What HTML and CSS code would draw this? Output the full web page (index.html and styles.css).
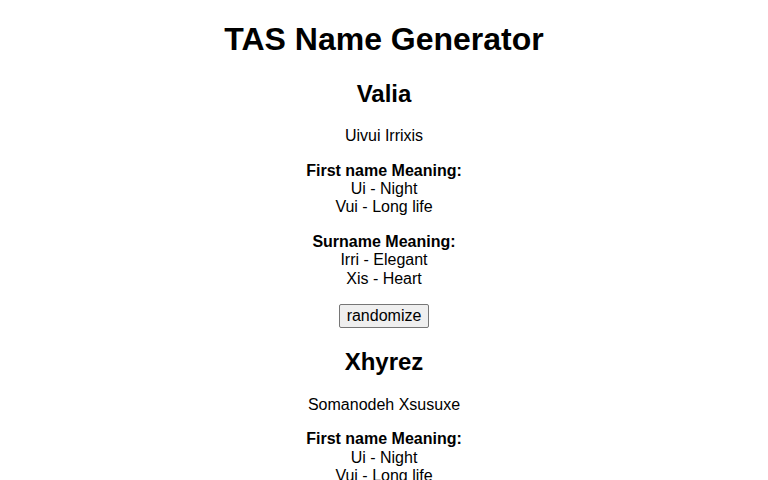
FILE: index.html
```html
<!DOCTYPE html>
<html lang="en">
<head>
    <meta charset="UTF-8">
    <meta name="viewport" content="width=device-width, initial-scale=1.0">
    <title>TAS Name Generator</title>
    <link rel="stylesheet" href="styles.css">
</head>
<body>
    <h1>TAS Name Generator</h1>

    <!-- First generated name -->
    <div class="name-card">
        <h2>Valia</h2>
        <p>Uivui Irrixis</p>
        <p><b>First name Meaning:</b><br>Ui - Night<br>Vui - Long life</p>
        <p><b>Surname Meaning:</b><br>Irri - Elegant<br>Xis - Heart</p>
        <p><button class="btn">randomize</button></p>
    </div>

    <!-- Second generated name -->
    <div class="name-card">
        <h2>Xhyrez</h2>
        <p>Somanodeh Xsusuxe</p>
        <p><b>First name Meaning:</b><br>Ui - Night<br>Vui - Long life</p>
        <p><b>Surname Meaning:</b><br>Irri - Elegant<br>Xis - Heart</p>
        <p><button class="btn">randomize</button></p>
    </div>
</body>
</html>
```

FILE: styles.css
```css
body {
    font-family: "Liberation Sans", Arial, sans-serif;
    margin: 0;
    line-height: 1.15;
    text-align: center;
    color: #000;
    background-color: #fff;
}

h1 {
    margin: 21px 0 22px;
}

.btn {
    font-family: "Liberation Sans", Arial, sans-serif;
    font-size: 16px;
    line-height: 1.15;
    padding: 2px 7px;
    background-color: #efefef;
    border: 1px solid #767676;
    border-radius: 2px;
    color: #000;
    cursor: pointer;
}

.btn:hover {
    background-color: #e5e5e5;
}
```
